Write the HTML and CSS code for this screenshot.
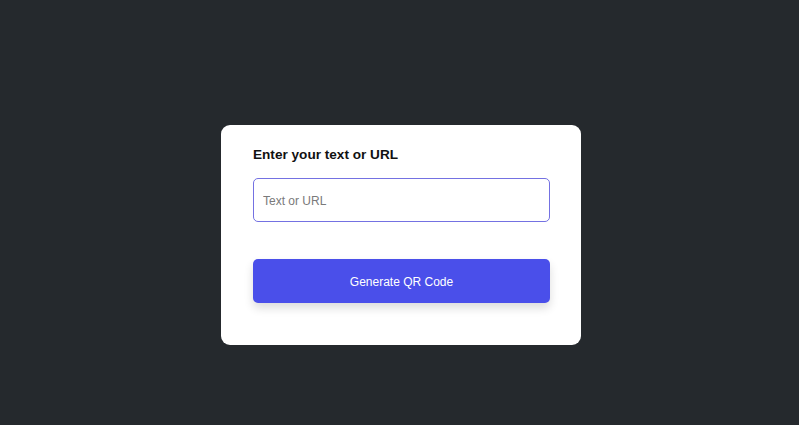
FILE: index.html
```html
<!DOCTYPE html>
<html lang="en">
<head>
<meta charset="utf-8">
<title>QR Code Generator</title>
<link rel="stylesheet" href="styles.css">
</head>
<body>
<div class="wrap">
  <div class="card">
    <h2 class="title">Enter your text or URL</h2>
    <input class="field" type="text" placeholder="Text or URL">
    <button class="btn" type="button">Generate QR Code</button>
  </div>
</div>
</body>
</html>
```

FILE: styles.css
```css
html, body {
  margin: 0;
  padding: 0;
  background: #25292d;
  font-family: "Liberation Sans", Arial, sans-serif;
}
.wrap {
  display: flex;
  justify-content: center;
  padding: 125px 0 0 3px;
}
.card {
  box-sizing: border-box;
  width: 360px;
  height: 220px;
  background: #ffffff;
  border-radius: 9px;
  padding: 21px 31px 0 32px;
  display: flex;
  flex-direction: column;
}
.title {
  margin: 0;
  font-size: 13.6px;
  line-height: 18px;
  font-weight: bold;
  color: #111111;
}
.field {
  box-sizing: border-box;
  margin-top: 14px;
  width: 297px;
  height: 44px;
  border: 1px solid #7471e2;
  border-radius: 5px;
  padding: 2px 9px 0;
  font-family: "Liberation Sans", Arial, sans-serif;
  font-size: 12px;
  color: #222;
  outline: none;
  background: #fff;
}
.field::placeholder {
  color: #7a7a7a;
}
.btn {
  box-sizing: border-box;
  margin-top: 37px;
  width: 297px;
  height: 44px;
  border: none;
  border-radius: 5px;
  padding: 2px 0 0;
  background: #4a4fea;
  color: #ffffff;
  font-family: "Liberation Sans", Arial, sans-serif;
  font-size: 12px;
  box-shadow: 0 5px 10px rgba(0, 0, 0, 0.14);
  cursor: pointer;
}
```
